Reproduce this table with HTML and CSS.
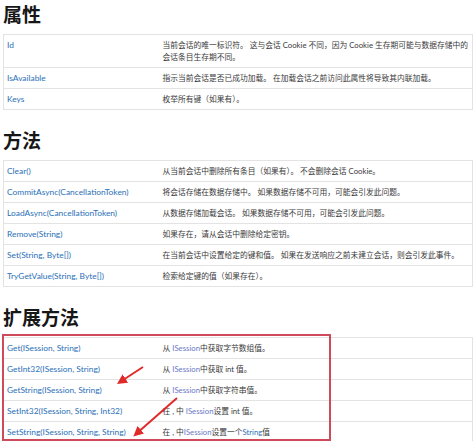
FILE: index.html
```html
<!DOCTYPE html>
<html lang="zh-CN">
<head>
<meta charset="utf-8">
<title>ISession</title>
<link rel="stylesheet" href="styles.css">
</head>
<body>
<div class="page">
  <h2 class="heading">属性</h2>
  <table class="members">
    <colgroup><col class="c-name"><col class="c-desc"></colgroup>
    <tr><td><a>Id</a></td><td>当前会话的唯一标识符。 这与会话 Cookie 不同，因为 Cookie 生存期可能与数据存储中的<br>会话条目生存期不同。</td></tr>
    <tr><td><a>IsAvailable</a></td><td>指示当前会话是否已成功加载。 在加载会话之前访问此属性将导致其内联加载。</td></tr>
    <tr><td><a>Keys</a></td><td>枚举所有键（如果有）。</td></tr>
  </table>

  <h2 class="heading">方法</h2>
  <table class="members">
    <colgroup><col class="c-name"><col class="c-desc"></colgroup>
    <tr><td><a>Clear()</a></td><td>从当前会话中删除所有条目（如果有）。 不会删除会话 Cookie。</td></tr>
    <tr><td><a>CommitAsync(CancellationToken)</a></td><td>将会话存储在数据存储中。 如果数据存储不可用，可能会引发此问题。</td></tr>
    <tr><td><a>LoadAsync(CancellationToken)</a></td><td>从数据存储加载会话。 如果数据存储不可用，可能会引发此问题。</td></tr>
    <tr><td><a>Remove(String)</a></td><td>如果存在，请从会话中删除给定密钥。</td></tr>
    <tr><td><a>Set(String, Byte[])</a></td><td>在当前会话中设置给定的键和值。 如果在发送响应之前未建立会话，则会引发此事件。</td></tr>
    <tr><td><a>TryGetValue(String, Byte[])</a></td><td>检索给定键的值（如果存在）。</td></tr>
  </table>

  <h2 class="heading">扩展方法</h2>
  <table class="members">
    <colgroup><col class="c-name"><col class="c-desc"></colgroup>
    <tr><td><a>Get(ISession, String)</a></td><td>从 <a class="ref">ISession</a>中获取字节数组值。</td></tr>
    <tr><td><a>GetInt32(ISession, String)</a></td><td>从 <a class="ref">ISession</a>中获取 int 值。</td></tr>
    <tr><td><a>GetString(ISession, String)</a></td><td>从 <a class="ref">ISession</a>中获取字符串值。</td></tr>
    <tr><td><a>SetInt32(ISession, String, Int32)</a></td><td>在 , 中 <a class="ref">ISession</a>设置 int 值。</td></tr>
    <tr><td><a>SetString(ISession, String, String)</a></td><td>在 , 中<a class="ref">ISession</a>设置一个<a>String</a>值</td></tr>
  </table>

  <div class="highlight-box"></div>
  <svg class="arrows" width="474" height="441" viewBox="0 0 474 441">
    <defs>
      <marker id="head" markerWidth="5" markerHeight="5" refX="3.2" refY="2.5" orient="auto" markerUnits="strokeWidth">
        <path d="M0,0 L5,2.5 L0,5 Z" fill="#e02a2a"/>
      </marker>
    </defs>
    <line x1="143" y1="367" x2="120" y2="382" stroke="#e02a2a" stroke-width="2" marker-end="url(#head)"/>
    <line x1="177" y1="398" x2="136" y2="434" stroke="#e02a2a" stroke-width="2" marker-end="url(#head)"/>
  </svg>
</div>
</body>
</html>
```

FILE: styles.css
```css
html, body {
  margin: 0;
  padding: 0;
  background: #ffffff;
}

.page {
  position: relative;
  padding: 0 1px 0 3px;
  width: 470px;
  height: 441px;
  overflow: hidden;
  font-family: "Lato", "Noto Sans CJK SC", sans-serif;
  font-size: 8px;
  color: #3a3a3a;
}

.heading {
  margin: 0;
  height: 28px;
  line-height: 28px;
  font-family: "Noto Sans CJK SC", sans-serif;
  font-size: 19px;
  font-weight: 700;
  color: #171717;
}

.members {
  width: 470px;
  margin: 6px 0 16px;
  border-collapse: collapse;
  table-layout: fixed;
  border: 1px solid #e3e3e3;
}

.members:last-of-type {
  margin-bottom: 0;
}

.c-name { width: 154px; }

.members td {
  padding: 4px 4px 4px 3px;
  line-height: 12px;
  vertical-align: top;
  border-top: 1px solid #e3e3e3;
  white-space: nowrap;
  overflow: hidden;
}

.members td:first-child {
  font-size: 8.4px;
}

.members td + td {
  padding-left: 5px;
  font-size: 7.75px;
}

.members a {
  color: #2a70b8;
  text-decoration: none;
}

.members a.ref {
  color: #6b78c8;
}

.highlight-box {
  position: absolute;
  left: 2px;
  top: 334px;
  width: 325px;
  height: 103px;
  border: 2px solid #cf4a5a;
}

.arrows {
  position: absolute;
  left: 0;
  top: 0;
  pointer-events: none;
}
```
